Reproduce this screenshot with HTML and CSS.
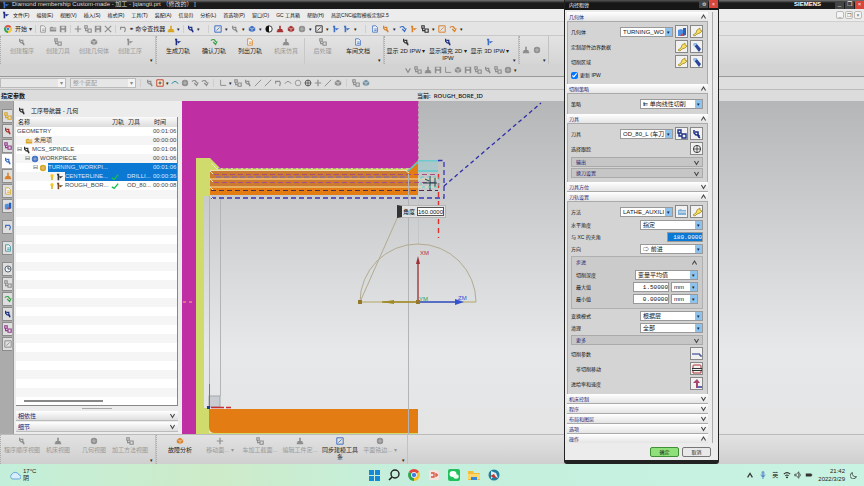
FILE: index.html
```html
<!DOCTYPE html>
<html>
<head>
    <meta charset="UTF-8">
    <title>NX - 加工</title>
    <link rel="stylesheet" href="styles.css">
</head>
<body>
    <!-- Набор иконок -->
    <svg class="sprite" width="0" height="0">
        <symbol id="i-gen" viewBox="0 0 10 10"><path d="M1 1h3v8h-2v-5zM4 4h5l-4 3z" fill="currentColor"/></symbol>
        <symbol id="i-tool" viewBox="0 0 10 10"><path d="M2 1v3l2 2h3M3 3h3v4l2 2M7 6v3" fill="none" stroke="currentColor" stroke-width="1.5"/></symbol>
        <symbol id="i-page" viewBox="0 0 10 10"><path d="M2 1h4l2 2v6h-6z" fill="#f4f4f4" stroke="currentColor"/><path d="M4 5h3M4 7h3" stroke="currentColor"/></symbol>
        <symbol id="i-folder" viewBox="0 0 10 10"><path d="M1 3l3-1 1 1h4v5h-8z" fill="currentColor"/><path d="M2 5h7" stroke="#eee"/></symbol>
        <symbol id="i-save" viewBox="0 0 10 10"><path d="M1 1h8v8h-8z" fill="currentColor"/><path d="M3 2h4v2h-4zM3 6h4v3h-4z" fill="#ddd"/></symbol>
        <symbol id="i-plus" viewBox="0 0 10 10"><path d="M5 1v8M1 5h8" stroke="currentColor" stroke-width="1.5"/></symbol>
        <symbol id="i-x" viewBox="0 0 10 10"><path d="M1 1l8 8M9 1l-8 8" stroke="currentColor" stroke-width="1.4"/></symbol>
        <symbol id="i-undo" viewBox="0 0 10 10"><path d="M2 6v-3h5l1 2-1 4" fill="none" stroke="currentColor" stroke-width="1.4"/></symbol>
        <symbol id="i-wrench" viewBox="0 0 10 10"><path d="M1 8l3-2 1-3 3-2v2l2 1-2 2-3 1-2 2z" fill="#f5e063" stroke="#a58a28" stroke-width=".8"/></symbol>
        <symbol id="i-torch" viewBox="0 0 10 10"><path d="M1 2l3-1 5 6-2 3z" fill="#2a4698"/><path d="M1 2l3-1 1 1-3 3z" fill="#9cc3ee"/></symbol>
        <symbol id="i-cube" viewBox="0 0 10 10"><path d="M5 1l4 2v4l-4 2-4-2v-4z" fill="currentColor"/><path d="M1 3l4 2 4-2M5 5v4" fill="none" stroke="#eee" stroke-width=".7"/></symbol>
        <symbol id="i-solid" viewBox="0 0 10 10"><path d="M1 3l3-1 2 1v6H1z" fill="#4d8ee0"/><path d="M6 1h3v7l-3 1z" fill="#2c5cb8"/><path d="M3 9l2-3 2 3z" fill="#c04a4a"/></symbol>
        <symbol id="i-ball" viewBox="0 0 10 10"><circle cx="5" cy="5" r="4" fill="currentColor"/><path d="M2 5h6M5 2v6" stroke="#ddd" stroke-width=".6"/></symbol>
        <symbol id="i-ring" viewBox="0 0 10 10"><circle cx="5" cy="5" r="3.5" fill="none" stroke="currentColor"/></symbol>
        <symbol id="i-half" viewBox="0 0 10 10"><circle cx="5" cy="5" r="4" fill="#fff" stroke="#111"/><path d="M5 1a4 4 0 0 0 0 8z" fill="#111"/></symbol>
        <symbol id="i-box" viewBox="0 0 10 10"><path d="M1 1h8v8h-8z" fill="none" stroke="currentColor" stroke-width="1.2"/><path d="M3 7l4-4" stroke="currentColor"/></symbol>
        <symbol id="i-line" viewBox="0 0 10 10"><path d="M1 9l8-8" stroke="currentColor" stroke-width="1.2"/></symbol>
        <symbol id="i-arc" viewBox="0 0 10 10"><path d="M1 6q4-6 8 0" fill="none" stroke="currentColor" stroke-width="1.2"/></symbol>
        <symbol id="i-arrow" viewBox="0 0 10 10"><path d="M1 3q5-3 6 2M4 5l3 3 2-4" fill="none" stroke="currentColor" stroke-width="1.5"/></symbol>
        <symbol id="i-axis" viewBox="0 0 10 10"><path d="M2 1v7h7" fill="none" stroke="currentColor" stroke-width="1.2"/></symbol>
        <symbol id="i-branch" viewBox="0 0 10 10"><path d="M1 1h3v3h-3zM5 5h4v4h-4zM2 4v3h3" fill="none" stroke="currentColor" stroke-width="1.4"/></symbol>
        <symbol id="i-stamp" viewBox="0 0 10 10"><path d="M4 1h2v4h2v2h1v2h-8v-2h1v-2h2z" fill="currentColor"/></symbol>
        <symbol id="i-frame" viewBox="0 0 10 10"><path d="M1 1h8v8h-8z" fill="#fbeed0" stroke="#c03a2a" stroke-width="1.2"/><path d="M5 3v4M3 5h4" stroke="#333"/></symbol>
        <symbol id="i-target" viewBox="0 0 10 10"><circle cx="5" cy="5" r="3.6" fill="none" stroke="#333" stroke-width=".9"/><path d="M5 1v8M1 5h8" stroke="#333" stroke-width=".8"/></symbol>
        <symbol id="i-check" viewBox="0 0 10 10"><path d="M1 6l3 2 5-6" fill="none" stroke="#17c14b" stroke-width="1.8"/></symbol>
        <symbol id="i-key" viewBox="0 0 10 10"><circle cx="5" cy="3" r="2.8" fill="#f2c928"/><path d="M5 5v5" stroke="#d8ab16" stroke-width="2.4"/></symbol>
        <symbol id="i-clock" viewBox="0 0 10 10"><circle cx="5" cy="5" r="3.8" fill="#eef4fa" stroke="#52616e" stroke-width="1.2"/><path d="M5 2v3h3" stroke="#333" fill="none"/></symbol>
        <symbol id="i-down" viewBox="0 0 10 10"><path d="M2 3l3 5 3-5" fill="none" stroke="currentColor" stroke-width="1.5"/></symbol>
        <symbol id="i-up" viewBox="0 0 10 10"><path d="M2 8l3-5 3 5" fill="none" stroke="currentColor" stroke-width="1.5"/></symbol>
        <symbol id="i-chrome" viewBox="0 0 10 10"><path d="M5 5L.7 2.500a5 5 0 0 1 8.600 0z" fill="#e04a3b"/><path d="M5 5L.7 2.500A5 5 0 0 0 5 10z" fill="#2fa24f"/><path d="M5 5l4.300-2.500A5 5 0 0 1 5 10z" fill="#f4c430"/><circle cx="5" cy="5" r="2.200" fill="#3e7de0" stroke="#fff" stroke-width=".7"/></symbol>
    </svg>

    <header class="titlebar">
        <svg class="icon blue"><use href="#i-gen"/></svg>
        <span class="caption">Diamond membership Custom-made - 加工 - [qiangti.prt （修改的） ]</span>
        <span class="brand">SIEMENS</span>
        <span class="win">
            <button aria-label="最小化">_</button>
            <button aria-label="还原">❐</button>
            <button class="close" aria-label="关闭">×</button>
        </span>
    </header>

    <nav class="menubar">
        <svg class="icon navy"><use href="#i-gen"/></svg>
        <button>文件(F)</button>
        <button>编辑(E)</button>
        <button>视图(V)</button>
        <button>插入(S)</button>
        <button>格式(R)</button>
        <button>工具(T)</button>
        <button>装配(A)</button>
        <button>信息(I)</button>
        <button>分析(L)</button>
        <button>首选项(P)</button>
        <button>窗口(O)</button>
        <button>GC 工具箱</button>
        <button>帮助(H)</button>
        <button>昌凯CNC编程模板定制2.5</button>
        <span class="win light">
            <button aria-label="最小化文档">_</button>
            <button aria-label="还原文档">❐</button>
            <button aria-label="关闭文档">×</button>
        </span>
    </nav>

    <div class="tools">
        <svg class="icon"><use href="#i-chrome"/></svg>
        <button class="text">开始 ▾</button>
        <div class="set">
            <svg class="icon"><use href="#i-page"/></svg>
            <svg class="icon"><use href="#i-folder"/></svg>
            <svg class="icon"><use href="#i-save"/></svg>
        </div>
        <div class="set">
            <svg class="icon"><use href="#i-plus"/></svg>
            <svg class="icon"><use href="#i-branch"/></svg>
            <svg class="icon"><use href="#i-save"/></svg>
            <svg class="icon"><use href="#i-x"/></svg>
        </div>
        <div class="set">
            <svg class="icon"><use href="#i-undo"/></svg>
            <button class="text">⚭ 命令查找器</button>
            <svg class="icon gold"><use href="#i-stamp"/></svg><i>▾</i>
        </div>
        <div class="set">
            <svg class="icon navy"><use href="#i-tool"/></svg><i>▾</i>
        </div>
        <div class="set wide">
            <svg class="icon blue"><use href="#i-box"/></svg><i>▾</i>
            <svg class="icon"><use href="#i-tool"/></svg><i>▾</i>
            <svg class="icon blue"><use href="#i-cube"/></svg><i>▾</i>
            <svg class="icon"><use href="#i-half"/></svg>
            <svg class="icon red"><use href="#i-stamp"/></svg>
            <svg class="icon red"><use href="#i-cube"/></svg>
            <svg class="icon"><use href="#i-ball"/></svg><i>▾</i>
            <svg class="icon dark"><use href="#i-box"/></svg><i>▾</i>
            <svg class="icon blue"><use href="#i-gen"/></svg>
            <svg class="icon blue"><use href="#i-gen"/></svg><i>▾</i>
        </div>
        <div class="set wide">
            <svg class="icon blue"><use href="#i-page"/></svg>
            <svg class="icon orange"><use href="#i-tool"/></svg><i>▾</i>
            <svg class="icon blue"><use href="#i-arrow"/></svg>
            <svg class="icon orange"><use href="#i-gen"/></svg>
            <svg class="icon dark"><use href="#i-branch"/></svg><i>▾</i>
            <svg class="icon orange"><use href="#i-box"/></svg>
            <svg class="icon orange"><use href="#i-arrow"/></svg><i>▾</i>
        </div>
    </div>

    <div class="ribbon">
        <div class="group off">
            <button><svg class="icon"><use href="#i-tool"/></svg>创建程序</button>
            <button><svg class="icon"><use href="#i-branch"/></svg>创建刀具</button>
            <button><svg class="icon"><use href="#i-cube"/></svg>创建几何体</button>
            <button><svg class="icon"><use href="#i-gen"/></svg>创建工序</button>
            <i class="more">▾</i>
        </div>
        <div class="group">
            <button><svg class="icon navy"><use href="#i-gen"/></svg>生成刀轨</button>
            <button><svg class="icon green"><use href="#i-arrow"/></svg>确认刀轨</button>
            <button><svg class="icon orange"><use href="#i-page"/></svg>列出刀轨</button>
            <button class="off"><svg class="icon"><use href="#i-stamp"/></svg>机床仿真</button>
            <button class="off sep"><svg class="icon"><use href="#i-branch"/></svg>后处理</button>
            <button><svg class="icon blue"><use href="#i-page"/></svg>车间文档</button>
            <i class="more">▾</i>
        </div>
        <div class="group wide">
            <button><svg class="icon dark"><use href="#i-tool"/></svg>显示 2D IPW ▾</button>
            <button><svg class="icon navy"><use href="#i-tool"/></svg>显示填充 2D ▾<br>IPW</button>
            <button><svg class="icon blue"><use href="#i-gen"/></svg>显示 3D IPW ▾</button>
            <i class="more">▾</i>
        </div>
        <div class="group small off">
            <svg class="icon"><use href="#i-stamp"/></svg>
            <svg class="icon"><use href="#i-ball"/></svg>
            <i class="more">▾</i>
        </div>
    </div>

    <div class="subtools">
        <svg class="icon"><use href="#i-down"/></svg>
        <svg class="icon"><use href="#i-branch"/></svg>
        <svg class="icon"><use href="#i-stamp"/></svg>
        <svg class="icon"><use href="#i-save"/></svg>
        <svg class="icon"><use href="#i-axis"/></svg>
        <svg class="icon"><use href="#i-cube"/></svg>
        <svg class="icon"><use href="#i-save"/></svg>
        <svg class="icon"><use href="#i-branch"/></svg>
        <svg class="icon"><use href="#i-tool"/></svg>
        <svg class="icon"><use href="#i-branch"/></svg>
        <svg class="icon"><use href="#i-ball"/></svg>
        <i>▾</i>
    </div>

    <div class="selectbar">
        <span class="pick grey"><select aria-label="类型过滤器"><option></option></select></span>
        <span class="pick grey"><select aria-label="选择范围"><option>整个装配</option></select></span>
        <div class="set">
            <svg class="icon"><use href="#i-tool"/></svg>
            <svg class="icon"><use href="#i-frame"/></svg><i>▾</i>
            <svg class="icon teal"><use href="#i-arc"/></svg>
            <svg class="icon"><use href="#i-ball"/></svg>
            <svg class="icon"><use href="#i-arrow"/></svg>
            <svg class="icon"><use href="#i-arrow"/></svg>
        </div>
        <div class="set">
            <svg class="icon"><use href="#i-axis"/></svg><i>▾</i>
            <svg class="icon"><use href="#i-branch"/></svg>
            <svg class="icon"><use href="#i-tool"/></svg>
            <svg class="icon"><use href="#i-line"/></svg>
            <svg class="icon"><use href="#i-line"/></svg>
            <svg class="icon"><use href="#i-undo"/></svg>
            <svg class="icon"><use href="#i-arc"/></svg>
            <svg class="icon"><use href="#i-ring"/></svg>
            <svg class="icon"><use href="#i-target"/></svg>
            <svg class="icon"><use href="#i-plus"/></svg>
            <svg class="icon"><use href="#i-line"/></svg>
            <svg class="icon"><use href="#i-cube"/></svg>
        </div>
        <div class="set">
            <svg class="icon"><use href="#i-branch"/></svg>
            <svg class="icon steel"><use href="#i-cube"/></svg>
        </div>
    </div>

    <div class="prompt">
        <span>指定参数</span>
        <span class="status">当前:&nbsp; ROUGH_BORE_ID</span>
    </div>

    <main class="work">
        <aside class="tabs">
            <button aria-label="装配导航器"><svg class="icon gold"><use href="#i-branch"/></svg></button>
            <button aria-label="约束导航器"><svg class="icon red"><use href="#i-tool"/></svg></button>
            <button aria-label="部件导航器"><svg class="icon purple"><use href="#i-branch"/></svg></button>
            <button class="active" aria-label="工序导航器"><svg class="icon blue"><use href="#i-tool"/></svg></button>
            <button aria-label="机床导航器"><svg class="icon orange"><use href="#i-stamp"/></svg></button>
            <button aria-label="重用库"><svg class="icon gold"><use href="#i-page"/></svg></button>
            <button aria-label="视图"><svg class="icon gold"><use href="#i-solid"/></svg></button>
            <button class="apart" aria-label="浏览器"><svg class="icon blue"><use href="#i-undo"/></svg></button>
            <button class="apart" aria-label="文档"><svg class="icon teal"><use href="#i-page"/></svg></button>
            <button class="apart" aria-label="历史记录"><svg class="icon"><use href="#i-clock"/></svg></button>
            <button aria-label="系统材料"><svg class="icon"><use href="#i-branch"/></svg></button>
            <button aria-label="加工向导"><svg class="icon green"><use href="#i-arrow"/></svg></button>
            <button aria-label="角色"><svg class="icon navy"><use href="#i-tool"/></svg></button>
            <button aria-label="场景"><svg class="icon purple"><use href="#i-branch"/></svg></button>
            <button aria-label="模板"><svg class="icon"><use href="#i-box"/></svg></button>
        </aside>

        <section class="navigator">
            <h2><svg class="icon dark"><use href="#i-tool"/></svg>工序导航器 - 几何</h2>
            <div class="tree">
                <table>
                    <thead>
                        <tr><th>名称</th><th>刀轨</th><th>刀具</th><th>时间</th></tr>
                    </thead>
                    <tbody>
                        <tr><td>GEOMETRY</td><td></td><td></td><td>00:01:06</td></tr>
                        <tr><td><div class="node l1"><svg class="icon gold"><use href="#i-folder"/></svg>未用项</div></td><td></td><td></td><td>00:00:00</td></tr>
                        <tr><td><div class="node">⊟ <svg class="icon dark"><use href="#i-tool"/></svg>MCS_SPINDLE</div></td><td></td><td></td><td>00:01:06</td></tr>
                        <tr><td><div class="node l1">⊟ <svg class="icon blue"><use href="#i-ball"/></svg>WORKPIECE</div></td><td></td><td></td><td>00:01:06</td></tr>
                        <tr class="on"><td><div class="node l2">⊟ <svg class="icon gold"><use href="#i-ball"/></svg><b>TURNING_WORKPI...</b></div></td><td></td><td></td><td>00:01:06</td></tr>
                        <tr class="on"><td><div class="node l3"><svg class="icon key"><use href="#i-key"/></svg><svg class="icon dark"><use href="#i-gen"/></svg><b>CENTERLINE...</b></div></td><td><svg class="icon"><use href="#i-check"/></svg></td><td>DRILLI...</td><td>00:00:36</td></tr>
                        <tr><td><div class="node l3"><svg class="icon key"><use href="#i-key"/></svg><svg class="icon brown"><use href="#i-gen"/></svg>ROUGH_BOR...</div></td><td><svg class="icon"><use href="#i-check"/></svg></td><td>OD_80...</td><td>00:00:08</td></tr>
                    </tbody>
                </table>
                <div class="hscroll"></div>
            </div>
            <div class="splitter"></div>
            <button class="fold">相依性<svg class="icon"><use href="#i-down"/></svg></button>
            <button class="fold">细节<svg class="icon"><use href="#i-down"/></svg></button>
        </section>

        <section class="view">
            <svg class="scene" width="100%" height="100%">
                <g transform="translate(-182 -101)">
                    <!-- патрон -->
                    <path d="M182 101H418V168H196V434H182z" fill="#c02ea4"/>
                    <!-- заготовка -->
                    <path d="M196 158h14l10 10h188v3H210v25h-6v238h-8z" fill="#cfdc6c"/>
                    <path d="M203 408h6v25h209v2H203z" fill="#cfdc6c"/>
                    <path d="M209 409H418V433H215q-6 0-6-6z" fill="#e37d13"/>
                    <path d="M210 171H407L418 160V195H210z" fill="#e37d13"/>
                    <path d="M210 171H408v7H210zM210 180H418v6H210z" fill="#cb7b31"/>
                    <path d="M210 170.500H407M210 179H438M210 187H438" stroke="#eadfae"/>
                    <path d="M408 171l11-10h19v1M418 171h20" fill="none" stroke="#58cbd0" stroke-width="1.500"/>
                    <rect x="418" y="161" width="20" height="9" fill="#9ec9cd" opacity=".6"/>
                    <path d="M214 174.500H438M214 182.500H438" stroke="#a94f7d" stroke-dasharray="5 3"/>
                    <path d="M216 177H408" stroke="#7468c8" stroke-dasharray="5 3"/>
                    <path d="M211 190.500H438" stroke="#512e4a" stroke-dasharray="5 3"/>
                    <path d="M218 168.500H406M418.500 101V160" stroke="#bd83af" stroke-dasharray="3 2"/>
                    <path d="M211 198H444V160.500H438" fill="none" stroke="#3834b4" stroke-width="1.300" stroke-dasharray="5 3"/>
                    <path d="M444 186L541 103" stroke="#302da8" stroke-width="1.300" stroke-dasharray="4 3"/>
                    <path d="M438.500 174V238" stroke="#e0302c" stroke-width="1.400" stroke-dasharray="5 4"/>
                    <path d="M211 163l8 8M210 171l3 3M210 179l3 3M210 187l3 3M210 196l3 3M405 170l4 3" stroke="#e8e6c8"/>
                    <path d="M209.500 196V408M220.500 199V396M408.500 174V434" stroke="#b2b4b7"/>
                    <path d="M418.500 200V244" stroke="#c4c5c7"/>
                    <path d="M423 183h14M430 176v14M425 179l4 2M435 178v9" stroke="#164449" fill="none"/>
                    <path d="M421 177h18v10h-18z" fill="none" stroke="#5bced4" stroke-dasharray="3 3"/>
                    <path d="M183 302h3M189 302h3" stroke="#e9c56f"/>
                    <!-- система координат -->
                    <path d="M360 302A58 58 0 0 1 476 302M360 302L399 214" fill="none" stroke="#b3ab90"/>
                    <path d="M360 302H476" stroke="#b4a767"/>
                    <path d="M382 302l12-2v4z" fill="#a18a25"/><path d="M382 302H418" stroke="#a18a25" stroke-width="1.500"/>
                    <path d="M418 302H458" stroke="#3352d0" stroke-width="1.500"/><path d="M464 302l-9-3v6z" fill="#3352d0"/>
                    <path d="M418 302V262" stroke="#a54348" stroke-width="1.500"/><path d="M418 256l-2 8h4z" fill="#a02e34"/>
                    <path d="M358 300h4v4h-4zM416 300h4v4h-4z" fill="#95782b"/>
                    <text x="420" y="255" class="red">XM</text>
                    <text x="419" y="301" class="green">YM</text>
                    <text x="458" y="300" class="blue">ZM</text>
                    <rect x="209" y="396" width="11" height="11" fill="#c9ccd1" stroke="#a5a7aa"/>
                    <path d="M209.500 384v22" stroke="#777"/>
                    <path d="M211 407.500H231" stroke="#c22f37" stroke-width="1.500" stroke-dasharray="13 2"/><path d="M207 406h3v3h-3z" fill="#263e8c"/>
                </g>
            </svg>
            <div class="angle"><label for="angle">角度</label><input id="angle" type="text" value="160.0000"></div>
        </section>
    </main>

    <footer class="ribbon bottom">
        <div class="group off">
            <button><svg class="icon"><use href="#i-tool"/></svg>程序顺序视图</button>
            <button><svg class="icon"><use href="#i-stamp"/></svg>机床视图</button>
            <button><svg class="icon"><use href="#i-ball"/></svg>几何视图</button>
            <button><svg class="icon"><use href="#i-branch"/></svg>加工方法视图</button>
            <i class="more">▾</i>
        </div>
        <div class="group last">
            <button><svg class="icon orange"><use href="#i-cube"/></svg>故障分析</button>
            <button class="off"><svg class="icon"><use href="#i-plus"/></svg>移动面... ▾</button>
            <button class="off"><svg class="icon"><use href="#i-branch"/></svg>车加工截面...</button>
            <button class="off"><svg class="icon"><use href="#i-stamp"/></svg>编辑工件定...</button>
            <button><svg class="icon blue"><use href="#i-box"/></svg>同步建模工具<br>条</button>
            <button class="off"><svg class="icon"><use href="#i-ball"/></svg>平面铣边... ▾</button>
            <i class="more">▾</i>
        </div>
    </footer>

    <div class="taskbar">
        <div class="weather">
            <svg width="12" height="12" viewBox="0 0 12 12"><path d="M3 10a3 3 0 0 1 0-5 4 4 0 0 1 7 1 2 2 0 0 1 0 4z" fill="#d9eefc" stroke="#69a9d6"/></svg>
            <span>17°C<br>阴</span>
        </div>
        <div class="apps">
            <svg viewBox="0 0 12 12"><path d="M1 1h5v5H1zM7 1h5v5H7zM1 7h5v5H1zM7 7h5v5H7z" fill="#1688d8"/></svg>
            <svg viewBox="0 0 12 12"><circle cx="7" cy="5" r="4" fill="none" stroke="#222" stroke-width="1.400"/><path d="M4 8l-3 3" stroke="#222" stroke-width="1.600"/></svg>
            <svg viewBox="0 0 10 10"><use href="#i-chrome"/></svg>
            <svg viewBox="0 0 12 12"><path d="M1 1h8l2 2v8H1z" fill="#f5e3df"/><path d="M3 4h3v4H3M8 4v4M8 6h2" fill="none" stroke="#d4553f" stroke-width="1.300"/></svg>
            <svg viewBox="0 0 12 12"><rect width="12" height="12" rx="2" fill="#21c05c"/><ellipse cx="5" cy="5" rx="3.500" ry="3" fill="#fff"/><ellipse cx="8" cy="7.500" rx="2.700" ry="2.200" fill="#eafff0"/></svg>
            <svg viewBox="0 0 12 12"><path d="M0 2h5l1 2h6v7H0z" fill="#f3bb36"/><path d="M0 5h12v5H0z" fill="#fbd66b"/><path d="M3 8h6v3H3z" fill="#3987d6"/></svg>
            <svg viewBox="0 0 12 12"><circle cx="6" cy="6" r="5.500" fill="#227e9e"/><path d="M3 2l5 2 2 5-4-2-3 3z" fill="#e4edf3"/><path d="M2 7l4-2 3 5z" fill="#bf3c35"/></svg>
        </div>
        <div class="tray">
            <svg class="icon dark"><use href="#i-up"/></svg>
            <svg class="icon blue" viewBox="0 0 10 10"><path d="M4 1h2v5H4zM2 5q3 4 6 0M5 7v3" fill="none" stroke="currentColor"/></svg>
            <span>英</span>
            <div class="quick">
                <svg class="icon dark" viewBox="0 0 10 10"><path d="M1 4q4-4 8 0M3 6q2-2 4 0" fill="none" stroke="currentColor" stroke-width="1.300"/><circle cx="5" cy="8" r="1"/></svg>
                <svg class="icon dark" viewBox="0 0 10 10"><path d="M1 4h2l3-3v8L3 6H1zM7 3q2 2 0 4" fill="none" stroke="currentColor"/></svg>
                <svg class="icon dark" viewBox="0 0 10 10"><path d="M1 3h7v4H1zM8 4h1v2H8z" fill="currentColor"/></svg>
            </div>
            <span class="time">21:42<br>2022/3/29</span>
            <svg class="icon dark" viewBox="0 0 10 10"><path d="M3 2a4 4 0 1 0 5 5 4 4 0 0 1-5-5z" fill="none" stroke="currentColor"/></svg>
        </div>
    </div>

    <!-- Диалог операции -->
    <div class="dialog" role="dialog" aria-label="内径粗镗">
        <div class="dialog-title">内径粗镗
            <span class="win"><button aria-label="重置">⚙</button><button class="close" aria-label="关闭对话框">×</button></span>
        </div>
        <form class="dialog-body">
            <button type="button" class="head">几何体<svg class="icon"><use href="#i-up"/></svg></button>
            <div class="part">
                <div class="row tall"><label for="geom">几何体</label><span class="pick mid"><select id="geom"><option>TURNING_WORKPIECE</option></select></span><button type="button" class="tool" aria-label="新建几何体"><svg class="icon"><use href="#i-solid"/></svg></button><button type="button" class="tool" aria-label="编辑几何体"><svg class="icon"><use href="#i-wrench"/></svg></button></div>
                <div class="row tall"><span>定制部件边界数据</span><button type="button" class="tool" aria-label="编辑边界"><svg class="icon"><use href="#i-wrench"/></svg></button><button type="button" class="tool" aria-label="显示边界"><svg class="icon"><use href="#i-torch"/></svg></button></div>
                <div class="row tall"><span>切削区域</span><button type="button" class="tool" aria-label="编辑区域"><svg class="icon"><use href="#i-wrench"/></svg></button><button type="button" class="tool" aria-label="显示区域"><svg class="icon"><use href="#i-torch"/></svg></button></div>
                <div class="row"><input type="checkbox" id="ipw" checked><label for="ipw">更新 IPW</label></div>
            </div>
            <button type="button" class="head">切削策略<svg class="icon"><use href="#i-up"/></svg></button>
            <div class="part">
                <div class="row tall"><label for="strategy">策略</label><span class="pick"><select id="strategy"><option>⇇ 单向线性切削</option></select></span></div>
            </div>
            <button type="button" class="head">刀具<svg class="icon"><use href="#i-up"/></svg></button>
            <div class="part">
                <div class="row tall"><label for="cutter">刀具</label><span class="pick mid"><select id="cutter"><option>OD_80_L (车刀-标准)</option></select></span><button type="button" class="tool" aria-label="新建刀具"><svg class="icon navy"><use href="#i-branch"/></svg></button><button type="button" class="tool" aria-label="编辑刀具"><svg class="icon navy"><use href="#i-tool"/></svg></button></div>
                <div class="row tall"><span>选择跟踪</span><button type="button" class="tool" aria-label="跟踪点"><svg class="icon"><use href="#i-target"/></svg></button></div>
                <button type="button" class="sub">输出<svg class="icon"><use href="#i-down"/></svg></button>
                <button type="button" class="sub">换刀设置<svg class="icon"><use href="#i-down"/></svg></button>
            </div>
            <button type="button" class="head">刀具方位<svg class="icon"><use href="#i-down"/></svg></button>
            <button type="button" class="head">刀轨设置<svg class="icon"><use href="#i-up"/></svg></button>
            <div class="part">
                <div class="row tall"><label for="method">方法</label><span class="pick mid"><select id="method"><option>LATHE_AUXILIARY</option></select></span><button type="button" class="tool" aria-label="新建方法"><svg class="icon sky"><use href="#i-folder"/></svg></button><button type="button" class="tool" aria-label="编辑方法"><svg class="icon"><use href="#i-wrench"/></svg></button></div>
                <div class="row"><label for="level">水平角度</label><span class="pick"><select id="level"><option>指定</option></select></span></div>
                <div class="row"><label for="xc">与 XC 的夹角</label><input class="marked" id="xc" type="text" value="180.0000"></div>
                <div class="row"><label for="dir">方向</label><span class="pick"><select id="dir"><option>⇨ 前进</option></select></span></div>
                <fieldset class="box">
                    <button type="button" class="sub">步进<svg class="icon"><use href="#i-up"/></svg></button>
                    <div class="row"><label for="depth">切削深度</label><span class="pick"><select id="depth"><option>变量平均值</option></select></span></div>
                    <div class="row"><label for="max">最大值</label><input id="max" type="text" value="1.50000"><span class="pick unit"><select aria-label="最大值单位"><option>mm</option></select></span></div>
                    <div class="row"><label for="min">最小值</label><input id="min" type="text" value="0.00000"><span class="pick unit"><select aria-label="最小值单位"><option>mm</option></select></span></div>
                </fieldset>
                <div class="row"><label for="mode">变换模式</label><span class="pick"><select id="mode"><option>根据层</option></select></span></div>
                <div class="row"><label for="clean">清理</label><span class="pick"><select id="clean"><option>全部</option></select></span></div>
                <button type="button" class="sub">更多<svg class="icon"><use href="#i-down"/></svg></button>
                <div class="row tall"><span>切削参数</span><button type="button" class="tool" aria-label="切削参数"><svg class="icon navy" viewBox="0 0 10 10"><path d="M0 5h8v2h2" fill="none" stroke="currentColor"/></svg></button></div>
                <div class="row tall indent"><span>非切削移动</span><button type="button" class="tool" aria-label="非切削移动"><svg class="icon" viewBox="0 0 10 10"><path d="M1 4V2q0-1 1-1h6q1 0 1 1v2M1 7v2h8V7" fill="none" stroke="#a33"/><path d="M0 4.500h10v2H0z" fill="none" stroke="#333"/></svg></button></div>
                <div class="row tall"><span>进给率和速度</span><button type="button" class="tool" aria-label="进给率和速度"><svg class="icon" viewBox="0 0 10 10"><path d="M4 9V4H1l4-4 3 4H6v5z" fill="#a8456d"/><path d="M6 8h4" stroke="#2837a0" stroke-width="1.500"/></svg></button></div>
            </div>
            <button type="button" class="head">机床控制<svg class="icon"><use href="#i-down"/></svg></button>
            <button type="button" class="head">程序<svg class="icon"><use href="#i-down"/></svg></button>
            <button type="button" class="head">布局和图层<svg class="icon"><use href="#i-down"/></svg></button>
            <button type="button" class="head">选项<svg class="icon"><use href="#i-down"/></svg></button>
            <button type="button" class="head">操作<svg class="icon"><use href="#i-up"/></svg></button>
        </form>
        <div class="dialog-buttons">
            <button class="ok">确定</button>
            <button>取消</button>
        </div>
    </div>
</body>
</html>
```

FILE: styles.css
```css
* {
    box-sizing: border-box;
}

body {
    margin: 0;
    height: 100vh;
    display: flex;
    flex-direction: column;
    overflow: hidden;
    background: #d6d6d6;
    color: #222;
    font-family: "Liberation Sans", "Noto Sans CJK SC", sans-serif;
    font-size: 6px;
    line-height: 8px;
}

button, input, select {
    font: inherit;
    color: inherit;
    margin: 0;
    padding: 0;
    border: none;
    border-radius: 0;
    background: none;
    white-space: nowrap;
}

i {
    font-style: normal;
    font-size: 5px;
    color: #222;
}

.sprite {
    position: absolute;
}

.icon {
    width: 8px;
    height: 8px;
    flex: none;
    color: #8d8d8d;
}

.blue { color: #3d6fc4; fill: #3352d0; }
.navy { color: #1d2f85; }
.dark { color: #333; }
.red { color: #a83232; fill: #b8323a; }
.green { color: #3aa24a; fill: #2d9c45; }
.gold { color: #d9a520; }
.orange { color: #d9822b; }
.purple { color: #93388e; }
.teal { color: #268b9c; }
.steel { color: #7692a3; }
.brown { color: #7a4a20; }
.sky { color: #7fb2d8; }

/* Верхние панели */
.titlebar {
    height: 9px;
    flex: none;
    display: flex;
    align-items: center;
    gap: 2px;
    padding-left: 2px;
    background: linear-gradient(#777, #1b1b1b 3px);
    color: #ddd;
    line-height: 9px;
}

.caption {
    flex: 1;
}

.brand {
    color: #fff;
    font-weight: bold;
    margin-right: 12px;
}

.win {
    display: flex;
    gap: 1px;
}

.win button {
    width: 9px;
    height: 8px;
    line-height: 7px;
    background: #444;
    color: #eee;
    text-align: center;
}

.win .close {
    background: #d8453a;
}

.win.light {
    margin-left: auto;
    gap: 1px;
}

.win.light button {
    width: 8px;
    border: 1px solid #bbb;
    border-radius: 2px;
    background: #f4f4f4;
    color: #555;
    line-height: 5px;
}

.menubar {
    height: 13px;
    flex: none;
    display: flex;
    align-items: center;
    gap: 7px;
    padding: 0 2px;
    background: #ececec;
    border-bottom: 1px solid #d0d0d0;
    color: #111;
    font-size: 5px;
}

.menubar .icon {
    margin-right: -4px;
}

.tools {
    height: 14px;
    flex: none;
    display: flex;
    align-items: center;
    gap: 3px;
    padding-left: 4px;
    background: #e4e4e4;
    border-bottom: 1px solid #c8c8c8;
}

.set {
    display: flex;
    align-items: center;
    gap: 2px;
    padding-left: 3px;
    border-left: 1px solid #cfcfcf;
}

.set.wide {
    gap: 3px;
    margin-left: 5px;
    padding-left: 5px;
}

.selectbar .set {
    gap: 2px;
    padding-left: 5px;
}

.ribbon {
    height: 28px;
    flex: none;
    display: flex;
    background: linear-gradient(#e3e3e3, #d5d5d5);
    font-size: 6px;
    line-height: 7px;
}

.group {
    position: relative;
    display: flex;
    padding: 2px 7px 0 3px;
    border-right: 1px solid #c2c2c2;
    border-left: 1px dotted #aaa;
}

.group button {
    width: 36px;
    display: flex;
    flex-direction: column;
    align-items: center;
    line-height: 7px;
}

.group button .icon {
    margin-bottom: 2px;
}

.group.wide {
    padding-left: 0;
}

.group.wide button {
    width: 42px;
}

.group .sep {
    border-left: 1px solid #c8c8c8;
}

.group.small {
    gap: 3px;
    padding: 10px 7px 0 2px;
}

.off {
    color: #999;
}

.more {
    position: absolute;
    right: 2px;
    bottom: 0;
}

.subtools {
    height: 13px;
    flex: none;
    display: flex;
    align-items: center;
    gap: 2px;
    padding-left: 404px;
    background: #d3d3d3;
    border-bottom: 1px solid #999;
}

.selectbar {
    height: 13px;
    flex: none;
    display: flex;
    align-items: center;
    gap: 4px;
    background: #dedede;
    border-bottom: 1px solid #bbb;
    color: #999;
}

.selectbar .pick {
    width: 66px;
}

.prompt {
    height: 11px;
    flex: none;
    display: grid;
    grid-template-columns: 416px 1fr;
    align-items: center;
    padding-left: 1px;
    background: #dcdcdc;
    color: #111;
    font-weight: bold;
}

.status {
    font-family: "Noto Sans", "Noto Sans CJK SC", sans-serif;
    font-weight: 500;
}

/* Выпадающие списки */
.pick {
    position: relative;
    display: block;
    width: 63px;
    height: 10px;
}

.pick select {
    appearance: none;
    display: block;
    width: 100%;
    height: 10px;
    padding: 0 8px 0 2px;
    background: #fff;
    border: 1px solid #999;
    line-height: 8px;
    overflow: hidden;
}

.pick::after {
    content: "▾";
    position: absolute;
    top: 1px;
    right: 1px;
    width: 7px;
    height: 8px;
    background: #8fc3ec;
    color: #123;
    text-align: center;
    line-height: 8px;
    pointer-events: none;
}

.pick.grey select {
    background: #e6e6e6;
    border-color: #bbb;
}

.pick.grey::after {
    background: #f4f4f4;
    color: #888;
}

/* Рабочая область */
.work {
    flex: 1;
    min-height: 0;
    display: flex;
}

.tabs {
    width: 13px;
    display: flex;
    flex-direction: column;
    align-items: flex-end;
    gap: 1px;
    padding: 8px 1px 0 0;
    background: #ababab;
}

.tabs button {
    width: 10px;
    height: 14px;
    display: flex;
    align-items: center;
    justify-content: center;
    background: #dedede;
    border: 1px solid #8c8c8c;
    border-right: none;
}

.tabs .active {
    background: #fff;
    border-color: #fff;
}

.tabs .apart {
    margin-top: 6px;
}

.navigator {
    width: 169px;
    display: flex;
    flex-direction: column;
    padding: 3px 4px 1px 2px;
    background: #ececec;
    border-left: 1px solid #999;
}

.navigator h2 {
    height: 13px;
    display: flex;
    align-items: center;
    gap: 5px;
    margin: 0;
    padding-left: 2px;
    font-size: 6px;
    font-weight: normal;
    color: #111;
}

.tree {
    flex: 1;
    display: flex;
    flex-direction: column;
    justify-content: space-between;
    border-right: 1px solid #888;
    border-bottom: 1px solid #888;
    background: repeating-linear-gradient(#fff 0 9px, #f5f5f5 9px 18px) 0 10px;
}

table {
    width: 100%;
    border-collapse: collapse;
    table-layout: fixed;
}

th {
    height: 10px;
    padding: 0 2px;
    background: linear-gradient(#fafafa, #dcdcdc);
    text-align: left;
    font-weight: normal;
    line-height: 9px;
}

th:nth-child(2) { width: 16px; }
th:nth-child(3) { width: 26px; }
th:nth-child(4) { width: 25px; }

td {
    height: 9px;
    padding: 0 0 0 1px;
    line-height: 9px;
    white-space: nowrap;
    overflow: hidden;
    color: #444;
}

td .icon {
    display: block;
}

.node {
    display: flex;
    align-items: center;
    gap: 1px;
    height: 9px;
}

.node .key {
    width: 6px;
}

.l1 { padding-left: 8px; }
.l2 { padding-left: 16px; }
.l3 { padding-left: 32px; }

.node b {
    flex: 1;
    height: 9px;
    background: #0b78d4;
    color: #d7ecff;
    font-weight: normal;
}

.on td + td {
    background: #0b78d4;
    color: #d7ecff;
}

.hscroll {
    width: 79px;
    height: 2px;
    margin: 0 0 3px 8px;
    background: #888;
}

.splitter {
    width: 30px;
    height: 1px;
    margin: 2px auto;
    background: #aaa;
}

.fold {
    height: 10px;
    display: flex;
    justify-content: space-between;
    align-items: center;
    margin-bottom: 1px;
    padding: 0 2px;
    background: linear-gradient(#fff, #dedede);
    border-bottom: 1px solid #bbb;
    color: #1a1a78;
}

.view {
    flex: 1;
    position: relative;
    min-width: 0;
    background: linear-gradient(#b4b6b8, #d3d5d7 45%, #e6e8ea 75%, #e4e4e4);
}

.scene {
    display: block;
}

.scene text {
    font-size: 6px;
}

.angle {
    position: absolute;
    left: 215px;
    top: 104px;
    display: flex;
    align-items: center;
    gap: 2px;
    height: 13px;
    padding: 1px;
    background: #e2e2e2;
    border: 1px solid #b5b5b5;
    border-left: 5px solid #333;
    color: #111;
}

.angle input {
    width: 27px;
    height: 9px;
    background: #fff;
    border: 1px solid #555;
}

/* Нижняя панель */
.ribbon.bottom {
    height: 30px;
    background: linear-gradient(#e2e2e2, #cfcfcf);
    border-top: 1px solid #bbb;
}

.group.last button {
    width: 40px;
}

.taskbar {
    height: 22px;
    flex: none;
    display: grid;
    grid-template-columns: 1fr auto 1fr;
    align-items: center;
    padding: 0 6px 0 9px;
    background: linear-gradient(90deg, #c3efda, #cdebc8 25%, #c5efdc 45%, #c8f2e2);
}

.weather {
    display: flex;
    align-items: center;
    gap: 2px;
    line-height: 7px;
}

.apps {
    display: flex;
    gap: 8px;
}

.apps svg {
    width: 12px;
    height: 12px;
}

.tray {
    display: flex;
    align-items: center;
    justify-content: flex-end;
    gap: 5px;
}

.quick {
    display: flex;
    gap: 3px;
}

.time {
    text-align: right;
    line-height: 8px;
}

/* Окно операции */
.dialog {
    position: absolute;
    left: 564px;
    top: 0;
    bottom: 22px;
    width: 155px;
    display: flex;
    flex-direction: column;
    background: #ececec;
    border: 1px solid #222;
    border-top: none;
    border-bottom-width: 4px;
    border-radius: 0 0 3px 3px;
    color: #111;
    font-size: 5px;
}

.dialog-title {
    height: 10px;
    flex: none;
    display: flex;
    justify-content: space-between;
    padding-left: 4px;
    background: linear-gradient(#555, #161616 3px);
    color: #eee;
    line-height: 10px;
}

.dialog-body {
    flex: 1;
    min-height: 0;
    overflow: hidden;
    margin: 2px 5px 0 2px;
    padding-right: 4px;
    border-right: 1px solid #aaa;
}

.head {
    width: 100%;
    height: 10px;
    display: flex;
    justify-content: space-between;
    align-items: center;
    padding: 0 1px 0 2px;
    background: linear-gradient(#fff, #e4e4e4);
    border-bottom: 1px solid #aaa;
    color: #1a1a70;
}

.head .icon, .sub .icon, .fold .icon {
    width: 7px;
    height: 7px;
    color: #444;
}

.part {
    padding: 2px 4px 3px 3px;
    background: #d4d4d4;
    border-left: 1px solid #aaa;
    border-right: 1px solid #aaa;
}

.row {
    height: 12px;
    display: flex;
    align-items: center;
    gap: 2px;
}

.row.tall {
    height: 15px;
}

.row.indent {
    padding-left: 5px;
}

.row > :first-child:not(input) {
    flex: 1;
    white-space: nowrap;
}

.row .pick, .row input, .tool {
    flex: none;
}

.row .pick.mid {
    width: 53px;
}

.row .pick.unit {
    width: 27px;
}

.tool {
    width: 13px;
    height: 13px;
    display: flex;
    align-items: center;
    justify-content: center;
    background: #f1f1f1;
    border: 1px solid #888;
}

.tool .icon {
    width: 10px;
    height: 10px;
}

.row select, .row input[type="text"] {
    font-size: 6px;
}

.row input[type="text"] {
    width: 36px;
    height: 10px;
    background: #fff;
    border: 1px solid #999;
    font-family: "Liberation Mono", monospace;
    text-align: right;
}

.row input.marked[type="text"] {
    background: #0b78d4;
    color: #fff;
}

.row input[type="checkbox"] {
    width: 7px;
    height: 7px;
}

.sub {
    width: 100%;
    height: 10px;
    display: flex;
    justify-content: space-between;
    align-items: center;
    margin: 1px 0;
    padding: 0 2px 0 4px;
    background: #c6c6c6;
    border: 1px solid #aaa;
    color: #1a1a70;
}

.box {
    min-width: 0;
    margin: 1px 0;
    padding: 0 4px 3px;
    border: 1px solid #b0b0b0;
    background: #cbcbcb;
}

.box .sub {
    margin: 0 0 2px;
    padding: 0;
    background: none;
    border: none;
}

.dialog-buttons {
    flex: none;
    display: flex;
    justify-content: flex-end;
    gap: 3px;
    padding: 4px 7px 3px;
}

.dialog-buttons button {
    width: 29px;
    height: 10px;
    background: #e9e9e9;
    border: 1px solid #777;
    border-radius: 2px;
}

.dialog-buttons .ok {
    background: #8fe07a;
    border-color: #3f8f35;
}
```
